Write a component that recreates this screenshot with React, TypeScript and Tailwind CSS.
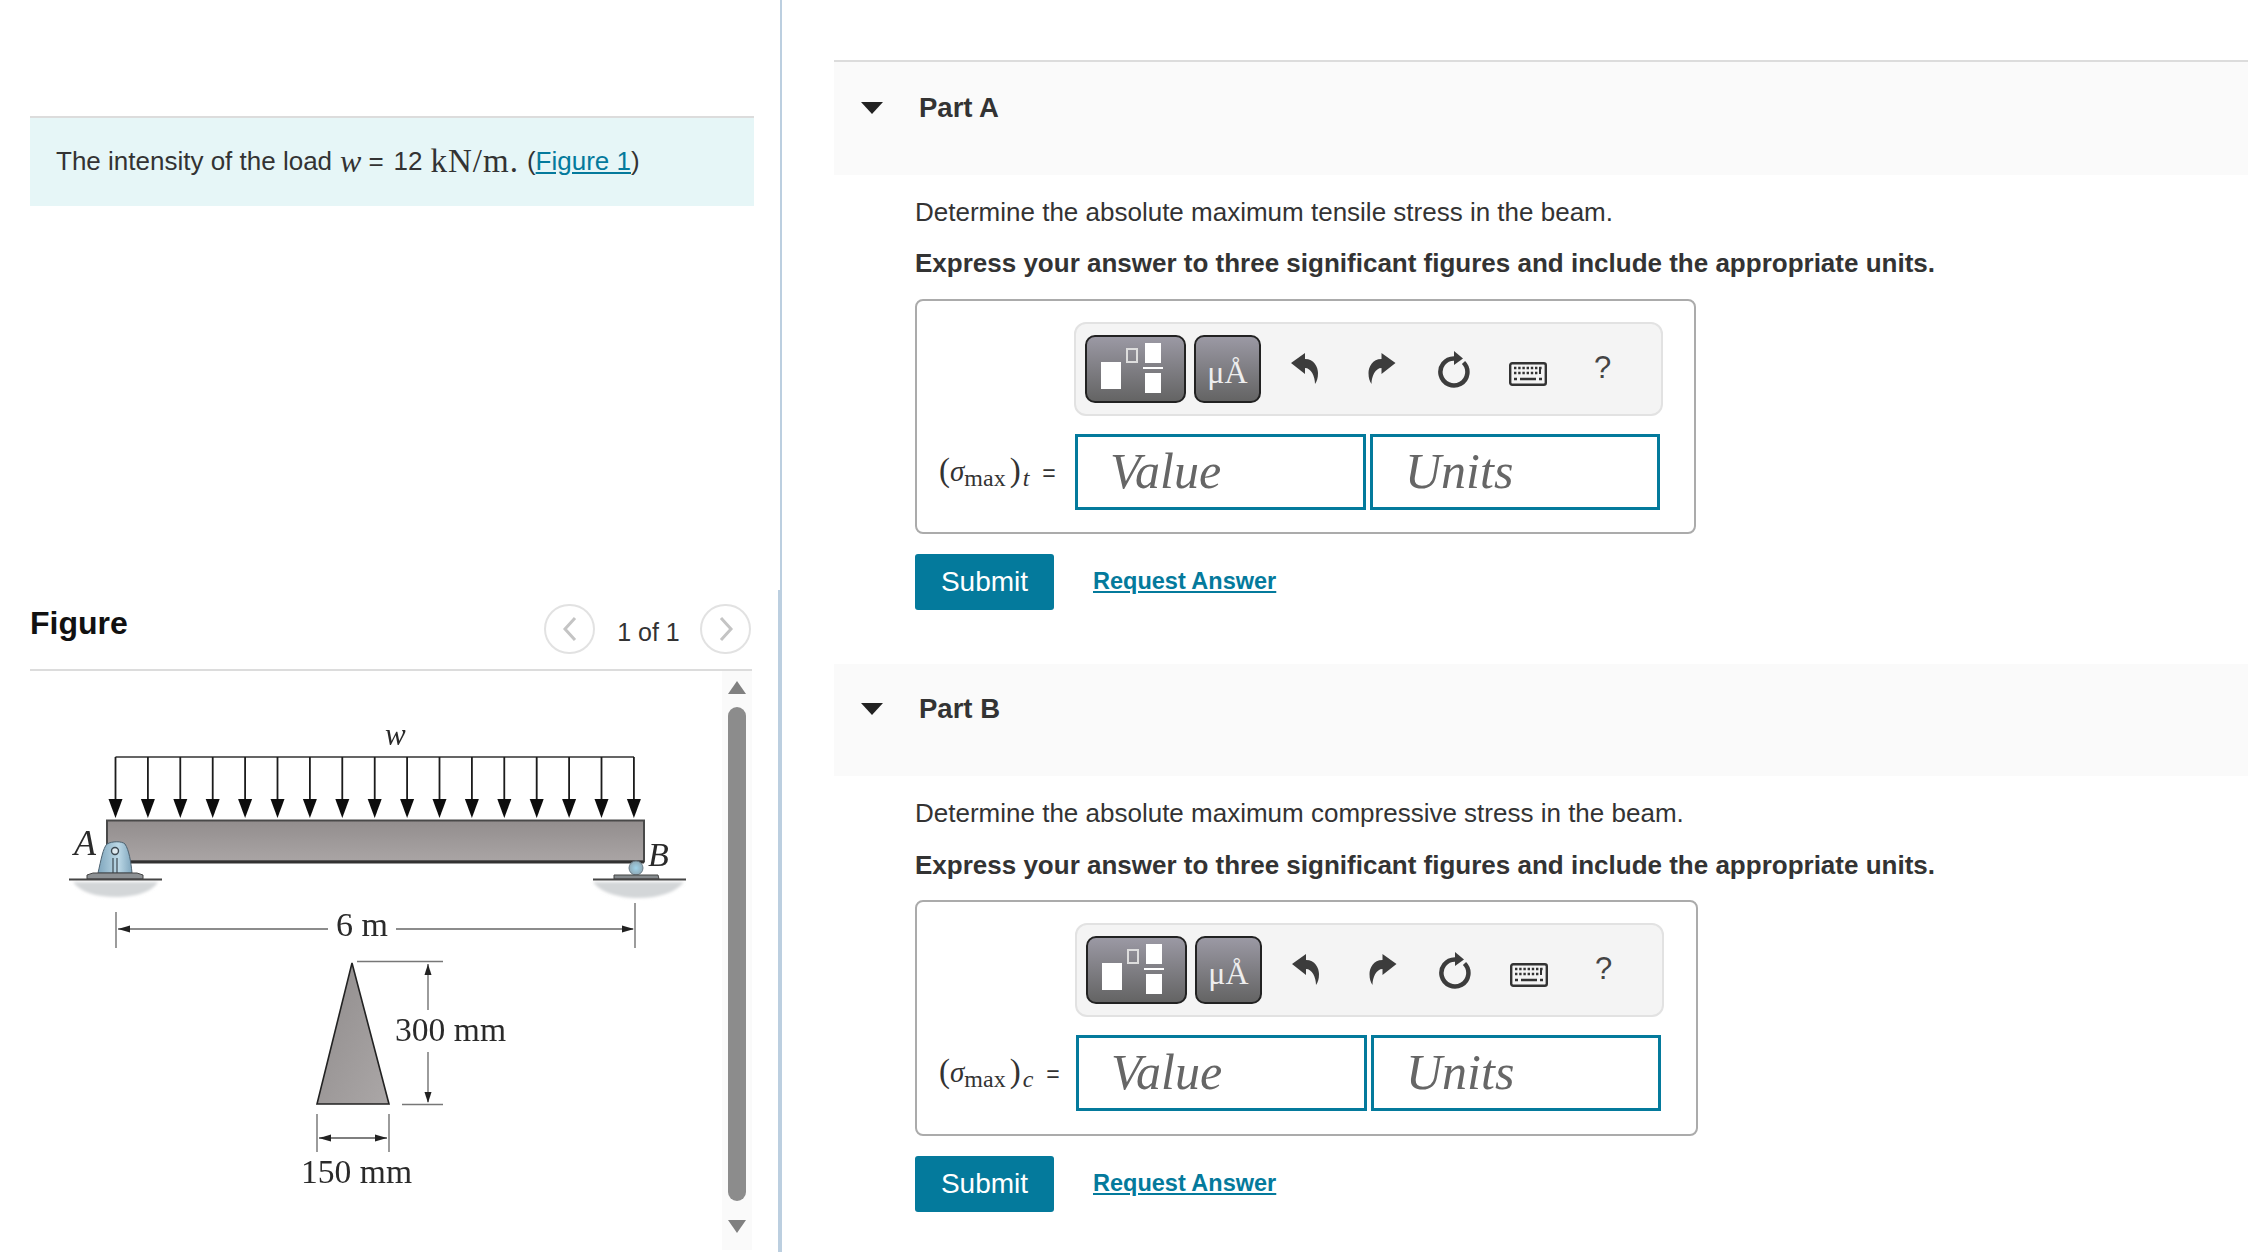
import React from "react";

const arrowXs = Array.from({ length: 17 }, (_, i) => 115.5 + i * 32.4);

function BeamFigure() {
  return (
    <svg viewBox="40 700 660 540" width={660} height={540} className="block shrink-0">
      <defs>
        <linearGradient id="beamFill" x1="0" y1="0" x2="0" y2="1">
          <stop offset="0" stopColor="#928d8d" />
          <stop offset="1" stopColor="#aaa5a5" />
        </linearGradient>
        <linearGradient id="triFill" x1="0" y1="0" x2="1" y2="1">
          <stop offset="0" stopColor="#8f8b8b" />
          <stop offset="1" stopColor="#aba7a7" />
        </linearGradient>
        <linearGradient id="pinFill" x1="0" y1="0" x2="1" y2="0">
          <stop offset="0" stopColor="#7fa6bd" />
          <stop offset="0.6" stopColor="#bcd8e6" />
          <stop offset="1" stopColor="#7fa6bd" />
        </linearGradient>
        <radialGradient id="ballFill">
          <stop offset="0" stopColor="#9fd3ea" />
          <stop offset="1" stopColor="#8fa9b5" />
        </radialGradient>
        <filter id="soft" x="-5%" y="-5%" width="110%" height="110%">
          <feGaussianBlur stdDeviation="0.45" />
        </filter>
        <filter id="softer" x="-10%" y="-30%" width="120%" height="160%">
          <feGaussianBlur stdDeviation="1.5" />
        </filter>
      </defs>
      <g filter="url(#soft)">
        <path d="M73 882 H158 C152 892 135 897 116 897 C96 897 80 892 73 882 Z" fill="#d3d6d8" filter="url(#softer)" />
        <path d="M593 882 H684 C676 892 660 898 638 898 C618 898 600 892 593 882 Z" fill="#d3d6d8" filter="url(#softer)" />

        <line x1="115.5" y1="757" x2="634" y2="757" stroke="#333" strokeWidth="1.6" />
        {arrowXs.map((x) => (
          <g key={x}>
            <line x1={x} y1="757" x2={x} y2="804" stroke="#1a1a1a" strokeWidth="1.8" />
            <polygon points={`${x - 7},799 ${x + 7},799 ${x},818`} fill="#111" />
          </g>
        ))}

        <rect x="107" y="820.5" width="537" height="41" fill="url(#beamFill)" stroke="#4a4a4a" strokeWidth="2" />
        <line x1="128" y1="862" x2="644" y2="862" stroke="#333" strokeWidth="3" />

        <path d="M98 873 C101 860 103 848 107 844 C112 841 122 841 125 844 C129 850 131 862 132 873 Z" fill="url(#pinFill)" stroke="#4d6270" strokeWidth="1" />
        <circle cx="115" cy="851" r="3.5" fill="#dfeaf0" stroke="#3d4a52" strokeWidth="1.4" />
        <line x1="113" y1="858" x2="113" y2="873" stroke="#3d4a52" strokeWidth="1.2" />
        <line x1="117" y1="858" x2="117" y2="873" stroke="#3d4a52" strokeWidth="1.2" />
        <path d="M87 879 V875 L93 873 H137 L143 875 V879 Z" fill="#8d9194" stroke="#444" strokeWidth="1" />
        <line x1="69" y1="879.5" x2="162" y2="879.5" stroke="#444" strokeWidth="2" />

        <circle cx="636" cy="868" r="7" fill="url(#ballFill)" stroke="#6b7d88" strokeWidth="1" />
        <path d="M614 879 V875 H658 L659 879 Z" fill="#858a8d" stroke="#444" strokeWidth="1" />
        <line x1="593" y1="879.5" x2="686" y2="879.5" stroke="#444" strokeWidth="2" />

        <line x1="116" y1="912" x2="116" y2="948" stroke="#666" strokeWidth="1.3" />
        <line x1="635" y1="903" x2="635" y2="948" stroke="#666" strokeWidth="1.3" />
        <line x1="118" y1="929" x2="328" y2="929" stroke="#666" strokeWidth="1.3" />
        <line x1="396" y1="929" x2="633" y2="929" stroke="#666" strokeWidth="1.3" />
        <polygon points="118,929 130,925.5 130,932.5" fill="#222" />
        <polygon points="634,929 622,925.5 622,932.5" fill="#222" />

        <polygon points="352,963 389,1104 317,1104" fill="url(#triFill)" stroke="#222" strokeWidth="1.6" />
        <line x1="357" y1="961.5" x2="443" y2="961.5" stroke="#777" strokeWidth="1.6" />
        <line x1="402" y1="1104.5" x2="443" y2="1104.5" stroke="#777" strokeWidth="1.6" />
        <line x1="428" y1="964" x2="428" y2="1010" stroke="#666" strokeWidth="1.3" />
        <line x1="428" y1="1052" x2="428" y2="1102" stroke="#666" strokeWidth="1.3" />
        <polygon points="428,964 424.5,975 431.5,975" fill="#222" />
        <polygon points="428,1103 424.5,1092 431.5,1092" fill="#222" />

        <line x1="317" y1="1114" x2="317" y2="1152" stroke="#666" strokeWidth="1.3" />
        <line x1="389" y1="1114" x2="389" y2="1152" stroke="#666" strokeWidth="1.3" />
        <line x1="319" y1="1138" x2="387" y2="1138" stroke="#555" strokeWidth="1.3" />
        <polygon points="319,1138 331,1134.5 331,1141.5" fill="#222" />
        <polygon points="387,1138 375,1134.5 375,1141.5" fill="#222" />

        <g fontFamily="'Liberation Serif', serif" fill="#2a2a2a">
          <text x="385" y="745" fontSize="31" fontStyle="italic">w</text>
          <text x="74" y="855" fontSize="36" fontStyle="italic">A</text>
          <text x="648" y="866" fontSize="34" fontStyle="italic">B</text>
          <text x="336" y="936" fontSize="34">6 m</text>
          <text x="395" y="1041" fontSize="33.6">300 mm</text>
          <text x="301" y="1183" fontSize="33.6">150 mm</text>
        </g>
      </g>
    </svg>
  );
}

function LeftPanel() {
  return (
    <aside className="relative w-[782px] h-full shrink-0 border-r-2 border-[#bccfe0] pl-[30px] pt-[116px]">
      <div className="absolute right-[-2px] top-[590px] bottom-0 w-[4px] bg-[#bccfe0]" />
      <div className="w-[724px] h-[90px] border-t-2 border-[#dcdcdc] bg-[#e6f6f7] pl-[26px] pb-[2px] flex items-center text-[26px] text-[#333] whitespace-nowrap">
        <span>The intensity of the load</span>
        <span className="ml-[8px] font-['Liberation_Serif',serif] italic text-[32px] leading-[32px]">w</span>
        <span className="ml-[7px]">=</span>
        <span className="ml-[10px]">12</span>
        <span className="ml-[8px] font-['Liberation_Serif',serif] text-[33px] leading-[32px] tracking-[1px]">kN/m.</span>
        <span className="ml-[8px]">
          (<a className="text-[#047a9c] underline">Figure 1</a>)
        </span>
      </div>

      <div className="mt-[398px] w-[722px] h-[67px] border-b-2 border-[#dcdcdc] flex items-start justify-between">
        <h2 className="text-[32px] font-bold text-[#111] leading-[36px] mt-[1px]">Figure</h2>
        <div className="flex items-center mr-[1px]">
          <span className="w-[51px] h-[50px] rounded-full border-2 border-[#e2e2e2] flex items-center justify-center">
            <svg width="16" height="26" viewBox="0 0 16 26">
              <path d="M13 2 L3 13 L13 24" fill="none" stroke="#c4c4c4" strokeWidth="3" />
            </svg>
          </span>
          <span className="w-[105px] pl-[2px] text-center text-[25px] text-[#333] leading-[30px] mt-[6px]">1 of 1</span>
          <span className="w-[51px] h-[50px] rounded-full border-2 border-[#e2e2e2] flex items-center justify-center">
            <svg width="16" height="26" viewBox="0 0 16 26">
              <path d="M3 2 L13 13 L3 24" fill="none" stroke="#c4c4c4" strokeWidth="3" />
            </svg>
          </span>
        </div>
      </div>

      <div className="relative w-[722px] h-[579px] overflow-hidden">
        <div className="ml-[10px] mt-[29px]">
          <BeamFigure />
        </div>
        <div className="absolute right-0 top-0 bottom-0 w-[30px] bg-[#fafafa]">
          <div className="absolute left-[6px] top-[10px] w-0 h-0 border-l-[9px] border-r-[9px] border-b-[13px] border-l-transparent border-r-transparent border-b-[#808080]" />
          <div className="absolute left-[6px] top-[36px] w-[18px] h-[494px] rounded-[9px] bg-[#8c8c8c]" />
          <div className="absolute left-[6px] top-[549px] w-0 h-0 border-l-[9px] border-r-[9px] border-t-[13px] border-l-transparent border-r-transparent border-t-[#808080]" />
        </div>
      </div>
    </aside>
  );
}

function Toolbar() {
  return (
    <div className="flex items-center w-[589px] h-[94px] rounded-[12px] border-2 border-[#e2e2e2] bg-[#f4f4f4] pl-[9px]">
      <button className="relative w-[101px] h-[68px] rounded-[10px] border-2 border-[#222] bg-gradient-to-b from-[#9b99a4] to-[#646464] shrink-0">
        <svg width="97" height="64" viewBox="1 2 97 64" className="block">
          <rect x="15" y="27" width="20" height="27" fill="#fff" />
          <rect x="41" y="14" width="10" height="13" fill="none" stroke="#ddd" strokeWidth="2" />
          <rect x="59" y="8" width="16" height="20" fill="#fff" />
          <rect x="57" y="32" width="20" height="2" fill="#fff" />
          <rect x="59" y="38" width="16" height="20" fill="#fff" />
        </svg>
      </button>
      <button className="ml-[8px] w-[67px] h-[68px] rounded-[10px] border-2 border-[#222] bg-gradient-to-b from-[#9b99a4] to-[#646464] shrink-0 font-['Liberation_Serif',serif] text-[32px] leading-[32px] text-[#eee] pt-[6px]">
        μÅ
      </button>
      <svg width="27" height="31" viewBox="0 0 27 31" className="ml-[30px] shrink-0 mb-[2px]">
        <path d="M0 10 L14 0 V6 C23 6 27 14 27 20 C27 25 26 28 24 31 C24 23 20 15 14 15 V21 Z" fill="#3c3c3c" />
      </svg>
      <svg width="28" height="31" viewBox="0 0 27 31" className="ml-[50px] shrink-0 mb-[2px] -scale-x-100">
        <path d="M0 10 L14 0 V6 C23 6 27 14 27 20 C27 25 26 28 24 31 C24 23 20 15 14 15 V21 Z" fill="#3c3c3c" />
      </svg>
      <svg width="32" height="37" viewBox="0 0 32 37" className="ml-[42px] shrink-0 mt-[1px]">
        <path d="M25.5 11.5 A13.5 13.5 0 1 1 16 7.5" fill="none" stroke="#3c3c3c" strokeWidth="4.5" />
        <polygon points="16,0 25,7.5 16,14" fill="#3c3c3c" />
      </svg>
      <svg width="38" height="24" viewBox="0 0 38 24" className="ml-[39px] shrink-0 mt-[10px]">
        <rect x="1.2" y="1.2" width="35.6" height="21.6" rx="2" fill="none" stroke="#333" strokeWidth="2.4" />
        <path d="M5 6 H33" stroke="#333" strokeWidth="2.4" strokeDasharray="2.4 1.8" />
        <path d="M5 11 H30" stroke="#333" strokeWidth="2.4" strokeDasharray="2.4 1.8" />
        <path d="M31 5 V12" stroke="#333" strokeWidth="2" />
        <path d="M5 17 H8 M11 17 H27 M30 17 H33" stroke="#333" strokeWidth="2.4" />
      </svg>
      <span className="ml-[47px] text-[31px] leading-[36px] text-[#444] mb-[2px]">?</span>
    </div>
  );
}

function AnswerBox({ sub, first }: { sub: string; first?: boolean }) {
  return (
    <div
      className={
        first
          ? "w-[781px] h-[235px] rounded-[8px] border-2 border-[#ababab] bg-white pt-[21px]"
          : "w-[783px] h-[236px] rounded-[8px] border-2 border-[#ababab] bg-white pt-[21px]"
      }
    >
      <div className={first ? "ml-[157px]" : "ml-[158px]"}>
        <Toolbar />
      </div>
      <div className="flex items-center mt-[18px]">
        <div
          className={
            first
              ? "w-[158px] shrink-0 pl-[22px] font-['Liberation_Serif',serif] text-[29px] text-[#333] whitespace-nowrap flex items-baseline"
              : "w-[159px] shrink-0 pl-[22px] font-['Liberation_Serif',serif] text-[29px] text-[#333] whitespace-nowrap flex items-baseline"
          }
        >
          <span className="text-[33px] leading-[33px]">(</span>
          <span className="italic">σ</span>
          <span className="text-[24px] relative top-[5px]">max</span>
          <span className="text-[33px] leading-[33px] ml-[4px]">)</span>
          <span className="italic text-[24px] relative top-[5px] ml-[2px]">{sub}</span>
          <span className="font-['Liberation_Sans',sans-serif] text-[23px] ml-[13px]">=</span>
        </div>
        <div className="w-[291px] h-[76px] border-[3px] border-[#047a9c] pl-[32px] font-['Liberation_Serif',serif] italic text-[50px] leading-[68px] text-[#666]">
          Value
        </div>
        <div className="ml-[4px] w-[290px] h-[76px] border-[3px] border-[#047a9c] pl-[32px] font-['Liberation_Serif',serif] italic text-[50px] leading-[68px] text-[#666]">
          Units
        </div>
      </div>
    </div>
  );
}

function Part({
  title,
  stress,
  sub,
  first,
}: {
  title: string;
  stress: string;
  sub: string;
  first?: boolean;
}) {
  return (
    <section>
      <header
        className={
          first
            ? "h-[115px] border-t-2 border-[#dcdcdc] bg-[#fafafa] pt-[30px]"
            : "h-[112px] bg-[#fafafa] pt-[29px]"
        }
      >
        <div className="flex items-center h-[32px]">
          <span className="ml-[27px] w-0 h-0 border-l-[11px] border-r-[11px] border-t-[12px] border-l-transparent border-r-transparent border-t-[#222]" />
          <h3 className="ml-[36px] text-[27.5px] font-bold text-[#333]">{title}</h3>
        </div>
      </header>
      <div className="pl-[81px]">
        <p className="mt-[19px] text-[26px] leading-[36px] text-[#333]">
          Determine the absolute maximum {stress} stress in the beam.
        </p>
        <p className={first ? "mt-[15px] text-[26px] leading-[36px] font-bold text-[#333]" : "mt-[16px] text-[26px] leading-[36px] font-bold text-[#333]"}>
          Express your answer to three significant figures and include the appropriate units.
        </p>
        <div className={first ? "mt-[18px]" : "mt-[17px]"}>
          <AnswerBox sub={sub} first={first} />
        </div>
        <div className="mt-[20px] flex items-center">
          <button className="w-[139px] h-[56px] rounded-[3px] bg-[#047a9c] text-white text-[28px]">Submit</button>
          <a className="ml-[39px] text-[23.5px] font-bold text-[#047a9c] underline">Request Answer</a>
        </div>
      </div>
    </section>
  );
}

export default function App() {
  return (
    <div className="flex w-full h-[1252px] overflow-hidden bg-white font-['Liberation_Sans',Arial,sans-serif]">
      <LeftPanel />
      <main className="flex-1 min-w-0 pl-[52px] pt-[60px]">
        <Part title="Part A" stress="tensile" sub="t" first />
        <div className="h-[54px]" />
        <Part title="Part B" stress="compressive" sub="c" />
      </main>
    </div>
  );
}
